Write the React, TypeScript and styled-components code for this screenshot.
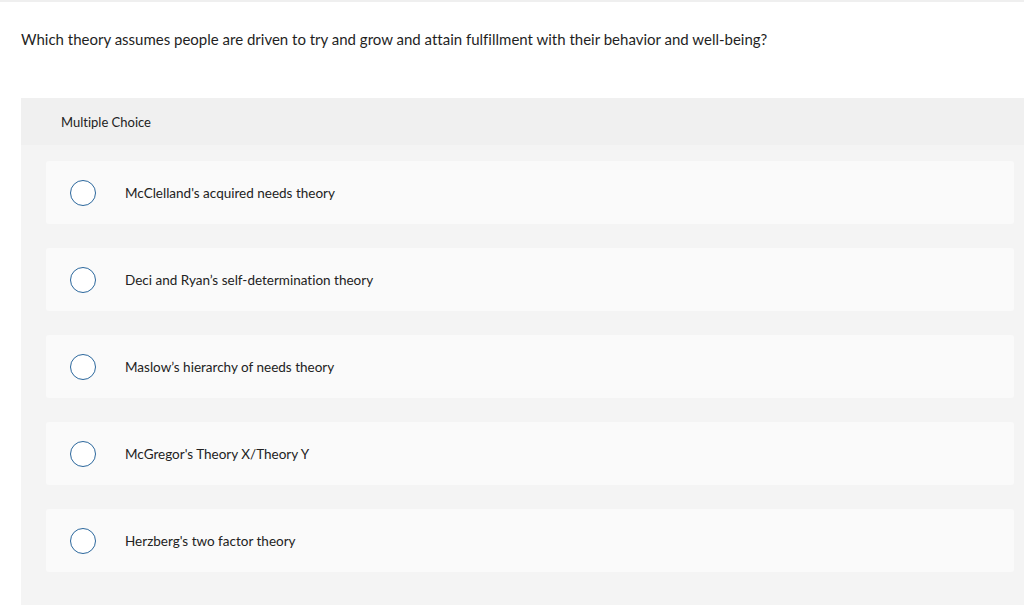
import { createGlobalStyle } from "styled-components";
import styled from "styled-components";

const GlobalStyle = createGlobalStyle`
  html, body {
    margin: 0;
    padding: 0;
    background: #ffffff;
  }
  body {
    font-family: Lato, "Open Sans", "Liberation Sans", sans-serif;
    font-variant-ligatures: none;
    color: #222222;
  }
`;

const Page = styled.main`
  border-top: 2px solid #efefef;
  height: 603px;
  overflow: hidden;
  padding-left: 21px;
`;

const Question = styled.p`
  margin: 0;
  padding: 27px 0 0;
  font-size: 15px;
  line-height: 20px;
  color: #1f1f1f;
`;

const Panel = styled.section`
  margin-top: 49px;
  background: #f4f4f4;
  padding-bottom: 40px;
`;

const PanelHeader = styled.header`
  background: #f0f0f0;
  height: 47px;
  display: flex;
  align-items: center;
  padding-left: 40px;
  padding-top: 1px;
  box-sizing: border-box;
  font-size: 13px;
  color: #222222;
`;

const OptionList = styled.div`
  display: flex;
  flex-direction: column;
  gap: 24px;
  padding: 16px 10px 0 25px;
`;

const OptionCard = styled.label`
  display: flex;
  align-items: center;
  height: 63px;
  background: #fafafa;
  border-radius: 3px;
  padding-left: 24px;
  font-size: 13.5px;
  color: #222222;
  cursor: pointer;
`;

const Radio = styled.span`
  box-sizing: border-box;
  width: 26px;
  height: 26px;
  border-radius: 50%;
  border: 1.5px solid #2b679c;
  background: #ffffff;
  flex-shrink: 0;
  margin-right: 29px;
`;

const OptionText = styled.span`
  padding-top: 1px;
`;

const options = [
  "McClelland's acquired needs theory",
  "Deci and Ryan\u2019s self-determination theory",
  "Maslow\u2019s hierarchy of needs theory",
  "McGregor's Theory X/Theory Y",
  "Herzberg's two factor theory",
];

export default function App() {
  return (
    <>
      <GlobalStyle />
      <Page>
        <Question>
          Which theory assumes people are driven to try and grow and attain
          fulfillment with their behavior and well-being?
        </Question>
        <Panel>
          <PanelHeader>Multiple Choice</PanelHeader>
          <OptionList>
            {options.map((text) => (
              <OptionCard key={text}>
                <Radio />
                <OptionText>{text}</OptionText>
              </OptionCard>
            ))}
          </OptionList>
        </Panel>
      </Page>
    </>
  );
}
